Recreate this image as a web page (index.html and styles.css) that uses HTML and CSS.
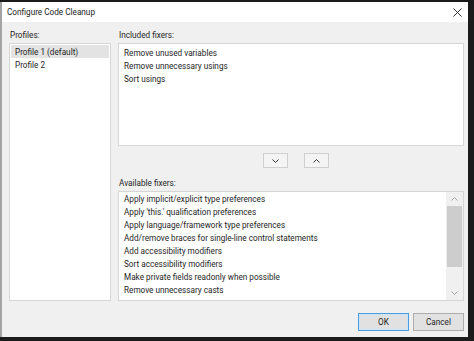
FILE: index.html
```html
<!DOCTYPE html>
<html lang="en">
<head>
  <meta charset="UTF-8">
  <title>Configure Code Cleanup</title>
  <link rel="stylesheet" href="styles.css">
</head>
<body>

  <div class="window">
    <div class="titlebar">
      <span class="title">Configure Code Cleanup</span>
      <svg class="close" width="9" height="9" viewBox="0 0 9 9">
        <path d="M0.5 0.5 L8.5 8.5 M8.5 0.5 L0.5 8.5" stroke="#333" stroke-width="1" fill="none"/>
      </svg>
    </div>

    <div class="main">
      <div class="col-left">
        <div class="label">Profiles:</div>
        <div class="list profiles">
          <div class="item selected">Profile 1 (default)</div>
          <div class="item">Profile 2</div>
        </div>
      </div>

      <div class="col-right">
        <div class="label">Included fixers:</div>
        <div class="list included">
          <div class="item">Remove unused variables</div>
          <div class="item">Remove unnecessary usings</div>
          <div class="item">Sort usings</div>
        </div>

        <div class="arrows">
          <button class="arrow-btn">
            <svg width="7" height="4" viewBox="0 0 7 4"><path d="M0.5 0.5 L3.5 3.5 L6.5 0.5" stroke="#333" fill="none"/></svg>
          </button>
          <button class="arrow-btn">
            <svg width="7" height="4" viewBox="0 0 7 4"><path d="M0.5 3.5 L3.5 0.5 L6.5 3.5" stroke="#333" fill="none"/></svg>
          </button>
        </div>

        <div class="label">Available fixers:</div>
        <div class="list available">
          <div class="rows">
            <div class="item">Apply implicit/explicit type preferences</div>
            <div class="item">Apply 'this.' qualification preferences</div>
            <div class="item">Apply language/framework type preferences</div>
            <div class="item">Add/remove braces for single-line control statements</div>
            <div class="item">Add accessibility modifiers</div>
            <div class="item">Sort accessibility modifiers</div>
            <div class="item">Make private fields readonly when possible</div>
            <div class="item">Remove unnecessary casts</div>
          </div>
          <div class="scrollbar">
            <svg class="sb-arrow" width="7" height="4" viewBox="0 0 7 4"><path d="M0.5 3.5 L3.5 0.5 L6.5 3.5" stroke="#a6a6a6" fill="none"/></svg>
            <div class="track"><div class="thumb"></div></div>
            <svg class="sb-arrow" width="7" height="4" viewBox="0 0 7 4"><path d="M0.5 0.5 L3.5 3.5 L6.5 0.5" stroke="#a6a6a6" fill="none"/></svg>
          </div>
        </div>

        <div class="buttons">
          <button class="btn default">OK</button>
          <button class="btn">Cancel</button>
        </div>
      </div>
    </div>
  </div>

</body>
</html>
```

FILE: styles.css
```css
* {
  margin: 0;
  padding: 0;
  box-sizing: border-box;
}

html, body {
  height: 100%;
}

body {
  background: #1b1b1b;
  font-family: Roboto, 'Segoe UI', sans-serif;
  font-size: 8.2px;
  color: #1e1e1e;
}

.window {
  width: 468px;
  height: 335px;
  margin-top: 2px;
  border-left: 2px solid #a3a3a3;
  background: #f0f0f0;
  display: flex;
  flex-direction: column;
}

.titlebar {
  height: 20px;
  background: #fff;
  display: flex;
  align-items: center;
  justify-content: space-between;
  padding: 0 6px 0 5px;
}

.title {
  color: #222;
}

.main {
  display: flex;
  gap: 7px;
  padding: 6px 0 0 7px;
}

.label {
  height: 15px;
  line-height: 15px;
  padding-left: 1px;
}

.list {
  background: #fff;
  border: 1px solid #d6d6d6;
  padding: 1px;
}

.col-left {
  width: 102px;
  display: flex;
  flex-direction: column;
}

.profiles {
  height: 258px;
}

.item {
  height: 13px;
  line-height: 14px;
  padding-left: 4px;
  white-space: nowrap;
}

.item.selected {
  background: #e3e3e3;
}

.col-right {
  width: 346px;
  display: flex;
  flex-direction: column;
}

.included {
  height: 103px;
  padding-top: 2px;
}

.arrows {
  display: flex;
  justify-content: center;
  gap: 16px;
  padding: 7px 0 0 9px;
  height: 30px;
}

.arrow-btn {
  width: 25px;
  height: 15px;
  background: #f4f4f4;
  border: 1px solid #cfcfcf;
  display: flex;
  align-items: center;
  justify-content: center;
}

.available {
  height: 110px;
  display: flex;
  padding: 0;
}

.available .rows {
  flex: 1;
  padding: 0 1px;
}

.scrollbar {
  width: 17px;
  background: #f0f0f0;
  display: flex;
  flex-direction: column;
  align-items: center;
  padding: 5px 0;
}

.sb-arrow {
  flex: none;
}

.track {
  flex: 1;
  width: 100%;
  padding: 5px 0 0;
}

.thumb {
  height: 61px;
  background: #cdcdcd;
  margin: 0 1px;
}

.buttons {
  display: flex;
  justify-content: flex-end;
  gap: 4px;
  padding-top: 12px;
}

.btn {
  width: 51px;
  height: 18px;
  font-family: inherit;
  font-size: 8.2px;
  color: #1e1e1e;
  background: #e1e1e1;
  border: 1px solid #adadad;
}

.btn.default {
  border: 1px solid #4a9be0;
  box-shadow: inset 0 0 0 1px #cde4f7;
}
```
